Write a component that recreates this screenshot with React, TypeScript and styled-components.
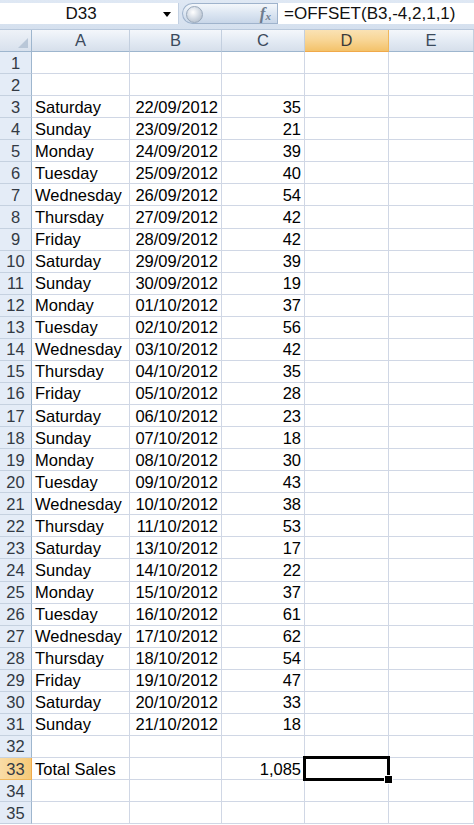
import React from "react";
import styled, { createGlobalStyle } from "styled-components";

const GlobalStyle = createGlobalStyle`
  html, body {
    margin: 0;
    padding: 0;
    background: #ffffff;
    overflow: hidden;
  }
  body {
    font-family: "Liberation Sans", Arial, sans-serif;
  }
  * {
    box-sizing: border-box;
  }
`;

type Row = [string, string, string];

const rows: Row[] = [
  ["Saturday", "22/09/2012", "35"],
  ["Sunday", "23/09/2012", "21"],
  ["Monday", "24/09/2012", "39"],
  ["Tuesday", "25/09/2012", "40"],
  ["Wednesday", "26/09/2012", "54"],
  ["Thursday", "27/09/2012", "42"],
  ["Friday", "28/09/2012", "42"],
  ["Saturday", "29/09/2012", "39"],
  ["Sunday", "30/09/2012", "19"],
  ["Monday", "01/10/2012", "37"],
  ["Tuesday", "02/10/2012", "56"],
  ["Wednesday", "03/10/2012", "42"],
  ["Thursday", "04/10/2012", "35"],
  ["Friday", "05/10/2012", "28"],
  ["Saturday", "06/10/2012", "23"],
  ["Sunday", "07/10/2012", "18"],
  ["Monday", "08/10/2012", "30"],
  ["Tuesday", "09/10/2012", "43"],
  ["Wednesday", "10/10/2012", "38"],
  ["Thursday", "11/10/2012", "53"],
  ["Saturday", "13/10/2012", "17"],
  ["Sunday", "14/10/2012", "22"],
  ["Monday", "15/10/2012", "37"],
  ["Tuesday", "16/10/2012", "61"],
  ["Wednesday", "17/10/2012", "62"],
  ["Thursday", "18/10/2012", "54"],
  ["Friday", "19/10/2012", "47"],
  ["Saturday", "20/10/2012", "33"],
  ["Sunday", "21/10/2012", "18"],
];

const columns = ["A", "B", "C", "D", "E"];
const ACTIVE_COL = "D";
const ACTIVE_ROW = 33;
const ROW_COUNT = 35;

function cellsFor(row: number): string[] {
  if (row >= 3 && row <= 31) {
    const [day, date, sales] = rows[row - 3];
    return [day, date, sales, "", ""];
  }
  if (row === 33) return ["Total Sales", "", "1,085", "", ""];
  return ["", "", "", "", ""];
}

export default function App() {
  const rowNumbers = Array.from({ length: ROW_COUNT }, (_, i) => i + 1);

  return (
    <Page>
      <GlobalStyle />
      <FormulaBar>
        <NameBox>
          <NameText>D33</NameText>
          <DropArrow />
        </NameBox>
        <FxPill>
          <PillKnob />
          <FxLabel>
            f<sub>x</sub>
          </FxLabel>
        </FxPill>
        <FormulaInput>=OFFSET(B3,-4,2,1,1)</FormulaInput>
      </FormulaBar>

      <Sheet>
        <Corner>
          <CornerTriangle />
        </Corner>
        {columns.map((c) => (
          <ColHead key={c} $active={c === ACTIVE_COL}>
            {c}
          </ColHead>
        ))}

        {rowNumbers.map((r) => (
          <React.Fragment key={r}>
            <RowHead $active={r === ACTIVE_ROW}>{r}</RowHead>
            {cellsFor(r).map((value, i) => (
              <Cell
                key={i}
                $align={i === 0 ? "left" : "right"}
                $selected={r === ACTIVE_ROW && columns[i] === ACTIVE_COL}
              >
                {value}
              </Cell>
            ))}
          </React.Fragment>
        ))}
      </Sheet>
    </Page>
  );
}

const Page = styled.div`
  width: 474px;
  height: 825px;
  overflow: hidden;
  background: #ffffff;
`;

const FormulaBar = styled.div`
  display: flex;
  align-items: stretch;
  height: 30px;
  padding: 3px 0 5px;
  background: linear-gradient(#dfe8f4, #d5e0ee);
  border-bottom: 1px solid #b8c8dc;
`;

const NameBox = styled.div`
  position: relative;
  display: flex;
  align-items: center;
  justify-content: center;
  width: 179px;
  padding-right: 16px;
  background: #ffffff;
  border-right: 1px solid #c2d0e2;
`;

const NameText = styled.span`
  font-size: 17px;
  color: #111111;
`;

const DropArrow = styled.span`
  position: absolute;
  right: 7px;
  top: 9px;
  width: 0;
  height: 0;
  border-left: 4px solid transparent;
  border-right: 4px solid transparent;
  border-top: 5px solid #000000;
`;

const FxPill = styled.div`
  position: relative;
  display: flex;
  align-items: center;
  justify-content: flex-end;
  width: 95px;
  margin-left: 3px;
  padding-right: 6px;
  border: 1px solid #9fb3cc;
  border-right: none;
  border-radius: 12px 0 0 12px;
  background: linear-gradient(#f4f7fb 0%, #dce6f2 50%, #c8d6e8 100%);
`;

const PillKnob = styled.span`
  position: absolute;
  left: 3px;
  top: 2px;
  width: 17px;
  height: 17px;
  border-radius: 50%;
  background: radial-gradient(circle at 40% 35%, #ffffff 0%, #d6dde6 45%, #a7b3c2 100%);
  border: 1px solid #9aa9bb;
`;

const FxLabel = styled.span`
  font-family: "Liberation Serif", "Times New Roman", serif;
  font-style: italic;
  font-weight: bold;
  font-size: 17px;
  color: #6e7c8e;
  line-height: 1;

  sub {
    font-size: 11px;
    vertical-align: -1px;
  }
`;

const FormulaInput = styled.div`
  flex: 1;
  display: flex;
  align-items: center;
  padding-left: 6px;
  background: #ffffff;
  border-left: 1px solid #9fb3cc;
  font-size: 17px;
  color: #111111;
  white-space: nowrap;
`;

const Sheet = styled.div`
  display: grid;
  grid-template-columns: 32px 98px 92px 83px 84px 85px;
  grid-template-rows: 22px;
  grid-auto-rows: 22.07px;
  font-size: 16.5px;
`;

const Corner = styled.div`
  position: relative;
  background: linear-gradient(#eef2f8, #d8e1ed);
  border-right: 1px solid #9eb6ce;
  border-bottom: 1px solid #9eb6ce;
`;

const CornerTriangle = styled.span`
  position: absolute;
  right: 3px;
  bottom: 3px;
  width: 0;
  height: 0;
  border-left: 10px solid transparent;
  border-bottom: 10px solid #b9c7d8;
`;

const ColHead = styled.div<{ $active?: boolean }>`
  display: flex;
  align-items: center;
  justify-content: center;
  color: ${(p) => (p.$active ? "#3a3a3a" : "#3b4a5c")};
  background: ${(p) =>
    p.$active
      ? "linear-gradient(#fae2b4 0%, #f8d594 50%, #f3c26a 100%)"
      : "linear-gradient(#f4f7fb 0%, #e4ebf4 50%, #d6dfeb 100%)"};
  border-right: 1px solid ${(p) => (p.$active ? "#f0b75a" : "#c3cfdf")};
  border-bottom: 1px solid ${(p) => (p.$active ? "#f0a94a" : "#9eb6ce")};
`;

const RowHead = styled.div<{ $active?: boolean }>`
  display: flex;
  align-items: center;
  justify-content: center;
  padding-top: 1px;
  color: #333a44;
  background: ${(p) =>
    p.$active ? "linear-gradient(90deg, #f9dca6, #f5c978)" : "#e4ecf7"};
  border-right: 1px solid ${(p) => (p.$active ? "#f0a94a" : "#9eb6ce")};
  border-bottom: 1px solid ${(p) => (p.$active ? "#f0b75a" : "#c5d1e0")};
`;

const Cell = styled.div<{ $align: "left" | "right"; $selected?: boolean }>`
  position: relative;
  display: flex;
  align-items: center;
  justify-content: ${(p) => (p.$align === "left" ? "flex-start" : "flex-end")};
  padding: 1px 3px 0;
  color: #000000;
  white-space: nowrap;
  overflow: visible;
  border-right: 1px solid #d0d7e5;
  border-bottom: 1px solid #d0d7e5;

  ${(p) =>
    p.$selected &&
    `
    &::before {
      content: "";
      position: absolute;
      left: -2px;
      top: -2px;
      right: -2px;
      bottom: -2px;
      border: 3px solid #000000;
      z-index: 2;
    }
    &::after {
      content: "";
      position: absolute;
      right: -5px;
      bottom: -5px;
      width: 7px;
      height: 7px;
      background: #000000;
      border: 1px solid #ffffff;
      z-index: 3;
    }
  `}
`;
